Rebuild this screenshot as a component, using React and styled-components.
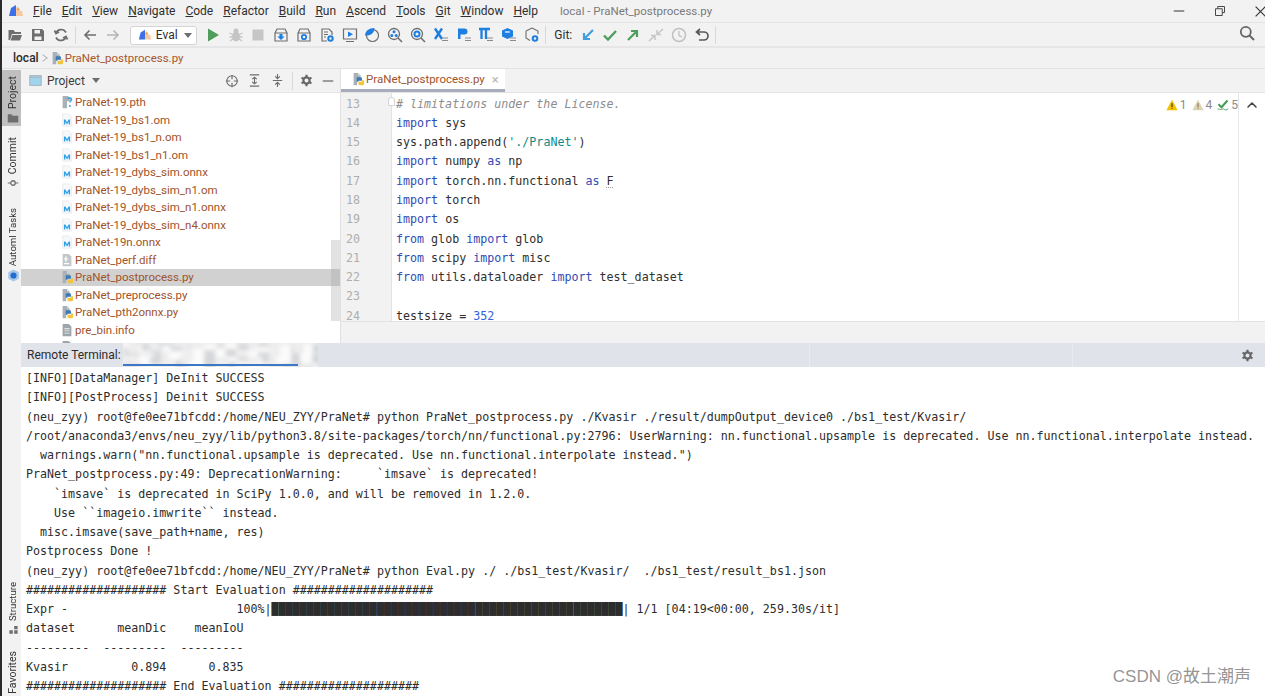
import React from "react";
import styled, { createGlobalStyle } from "styled-components";
import { ChevronUp } from "lucide-react";

const GlobalStyle = createGlobalStyle`
  html, body { margin: 0; padding: 0; background: #fff; }
  body { font-family: Roboto, "Liberation Sans", sans-serif; }
`;

const MENU = ["File", "Edit", "View", "Navigate", "Code", "Refactor", "Build", "Run", "Ascend", "Tools", "Git", "Window", "Help"];

const FILES = [
  ["pth", "PraNet-19.pth"],
  ["om", "PraNet-19_bs1.om"],
  ["om", "PraNet-19_bs1_n.om"],
  ["om", "PraNet-19_bs1_n1.om"],
  ["om", "PraNet-19_dybs_sim.onnx"],
  ["om", "PraNet-19_dybs_sim_n1.om"],
  ["om", "PraNet-19_dybs_sim_n1.onnx"],
  ["om", "PraNet-19_dybs_sim_n4.onnx"],
  ["om", "PraNet-19n.onnx"],
  ["diff", "PraNet_perf.diff"],
  ["py", "PraNet_postprocess.py", true],
  ["py", "PraNet_preprocess.py"],
  ["py", "PraNet_pth2onnx.py"],
  ["info", "pre_bin.info"],
  ["info", ""],
];

const TERMINAL = [
  "[INFO][DataManager] DeInit SUCCESS",
  "[INFO][PostProcess] Deinit SUCCESS",
  "(neu_zyy) root@fe0ee71bfcdd:/home/NEU_ZYY/PraNet# python PraNet_postprocess.py ./Kvasir ./result/dumpOutput_device0 ./bs1_test/Kvasir/",
  "/root/anaconda3/envs/neu_zyy/lib/python3.8/site-packages/torch/nn/functional.py:2796: UserWarning: nn.functional.upsample is deprecated. Use nn.functional.interpolate instead.",
  '  warnings.warn("nn.functional.upsample is deprecated. Use nn.functional.interpolate instead.")',
  "PraNet_postprocess.py:49: DeprecationWarning:     `imsave` is deprecated!",
  "    `imsave` is deprecated in SciPy 1.0.0, and will be removed in 1.2.0.",
  "    Use ``imageio.imwrite`` instead.",
  "  misc.imsave(save_path+name, res)",
  "Postprocess Done !",
  "(neu_zyy) root@fe0ee71bfcdd:/home/NEU_ZYY/PraNet# python Eval.py ./ ./bs1_test/Kvasir/  ./bs1_test/result_bs1.json",
  "#################### Start Evaluation ####################",
  "Expr -                        100%|" + "█".repeat(50) + "| 1/1 [04:19<00:00, 259.30s/it]",
  "dataset      meanDic    meanIoU",
  "---------  ---------  ---------",
  "Kvasir         0.894      0.835",
  "#################### End Evaluation ####################",
];

const Root = styled.div`
  position: relative;
  width: 1265px;
  height: 696px;
  box-sizing: border-box;
  border-left: 2px solid #2b2b2b;
  display: flex;
  flex-direction: column;
  overflow: hidden;
  background: #f2f2f2;
  color: #2f2f2f;
`;

const TitleBar = styled.div`
  height: 23px;
  box-sizing: border-box;
  flex: none;
  display: flex;
  align-items: center;
  font-size: 12px;
  border-bottom: 1px solid #e4e4e4;
`;

const Logo = styled.div`
  width: 20px;
  padding-left: 6px;
  display: flex;
  align-items: center;
`;

const Menu = styled.div`
  display: flex;
  gap: 10px;
  margin-left: 5px;
  width: 527px;
`;

const MenuItem = styled.span`
  &::first-letter { text-decoration: underline; }
  display: inline-block;
`;

const WindowTitle = styled.div`
  color: #7a7a7a;
  font-size: 11.5px;
  flex: 1;
`;

const WindowButtons = styled.div`
  display: flex;
  align-items: center;
  gap: 28px;
  margin-right: -1.5px;
`;

const Toolbar = styled.div`
  height: 25px;
  box-sizing: border-box;
  flex: none;
  display: flex;
  align-items: center;
  padding: 1px 0 0 2px;
  border-bottom: 2px solid #e6e6e6;
`;

const ToolButton = styled.div`
  width: 22.8px;
  height: 22px;
  flex: none;
  display: flex;
  align-items: center;
  justify-content: center;
`;

const ToolSep = styled.div`
  width: 1px;
  height: 18px;
  flex: none;
  background: #d8d8d8;
  margin: 0 ${(p) => p.$gap}px;
`;

const RunConfig = styled.div`
  width: 67px;
  height: 19px;
  flex: none;
  margin: 0 4.6px 0 5.8px;
  background: #fff;
  border: 1px solid #d4d4d4;
  border-radius: 3px;
  display: flex;
  align-items: center;
  gap: 4px;
  padding-left: 7px;
  box-sizing: border-box;
  font-size: 12px;
`;

const Caret = styled.span`
  width: 0;
  height: 0;
  margin-left: ${(p) => p.$left || 0}px;
  border-left: 4px solid transparent;
  border-right: 4px solid transparent;
  border-top: 5px solid #6e6e6e;
`;

const GitLabel = styled.span`
  font-size: 12px;
  margin: 0 4px 0 6px;
`;

const SearchSlot = styled.div`
  margin-left: auto;
  margin-right: 10px;
`;

const NavBar = styled.div`
  height: 21px;
  box-sizing: border-box;
  flex: none;
  display: flex;
  align-items: center;
  padding-left: 11px;
  font-size: 11.5px;
  color: #a8562a;
  border-bottom: 1px solid #e2e2e2;
`;

const NavRoot = styled.b`
  color: #2b2b2b;
  font-size: 12px;
  font-weight: 500;
`;

const NavChevron = styled.span`
  width: 5px;
  height: 5px;
  border-top: 1px solid #b5b5b5;
  border-right: 1px solid #b5b5b5;
  transform: rotate(45deg) skew(-8deg, -8deg);
  margin: 0 4px 0 1px;
`;

const NavIcon = styled.span`
  display: flex;
  margin-right: 1px;
`;

const Body = styled.div`
  flex: 1;
  min-height: 0;
  display: flex;
`;

const Stripe = styled.div`
  width: 19px;
  flex: none;
  display: flex;
  flex-direction: column;
  padding: 1px 0 2px;
  box-sizing: border-box;
  background: #f2f2f2;
`;

const StripeButton = styled.div`
  display: flex;
  flex-direction: column;
  align-items: center;
  gap: 3px;
  padding: ${(p) => (p.$active ? "6px 0 2px 3px" : "0 0 0 3px")};
  margin-top: ${(p) => p.$top || "0"};
  background: ${(p) => (p.$active ? "#bfbfbf" : "transparent")};
`;

const StripeLabel = styled.span`
  writing-mode: vertical-rl;
  transform: rotate(180deg);
  font-size: ${(p) => p.$size || 10.5}px;
  line-height: 14px;
  color: #333;
  white-space: nowrap;
`;

const Main = styled.div`
  flex: 1;
  min-width: 0;
  display: flex;
  flex-direction: column;
`;

const TopSplit = styled.div`
  height: 274px;
  flex: none;
  display: flex;
`;

const ProjectPanel = styled.div`
  width: 320px;
  flex: none;
  display: flex;
  flex-direction: column;
  border-right: 1px solid #e0e0e0;
  box-sizing: border-box;
`;

const PanelHeader = styled.div`
  height: 24px;
  flex: none;
  display: flex;
  align-items: center;
  padding-left: 8px;
  font-size: 12px;
  color: #3a3a3a;
  box-sizing: border-box;
  border-bottom: 1px solid #e6e6e6;
`;

const PanelTitle = styled.span`
  margin: 0 7px 0 5px;
`;

const PanelActions = styled.div`
  margin-left: auto;
  display: flex;
  align-items: center;
  gap: 8px;
  padding-right: 5px;
`;

const Tree = styled.div`
  flex: 1;
  min-height: 0;
  position: relative;
  overflow: hidden;
  background: #fff;
  padding-top: 0.5px;
`;

const TreeRow = styled.div`
  height: 17.5px;
  display: flex;
  align-items: center;
  padding-left: 39px;
  gap: 1px;
  font-size: 11.5px;
  color: #a0532a;
  background: ${(p) => (p.$selected ? "#d1d1d1" : "transparent")};
`;

const TreeScroll = styled.div`
  position: absolute;
  top: 147px;
  right: 0;
  width: 9px;
  height: 81px;
  background: rgba(160, 160, 160, 0.3);
`;

const Editor = styled.div`
  flex: 1;
  min-width: 0;
  display: flex;
  flex-direction: column;
`;

const TabBar = styled.div`
  height: 24px;
  flex: none;
  display: flex;
  border-bottom: 1px solid #e4e4e4;
  box-sizing: border-box;
`;

const Tab = styled.div`
  width: 164px;
  display: flex;
  align-items: center;
  gap: 1px;
  padding-left: 10px;
  box-sizing: border-box;
  background: #fff;
  border-bottom: 3px solid #a7adbd;
  font-size: 11.5px;
  color: #a0532a;
`;

const TabClose = styled.span`
  color: #b5b5b5;
  font-size: 13px;
  margin-left: 6px;
`;

const CodeArea = styled.div`
  height: 229px;
  flex: none;
  position: relative;
  overflow: hidden;
  padding-top: 1.5px;
  background: linear-gradient(90deg, #f2f2f2 50px, #e2e2e2 50px 51px, #fff 51px);
  border-bottom: 1px solid #e2e2e2;
  box-sizing: border-box;

  &::after {
    content: "";
    position: absolute;
    top: 0;
    bottom: 0;
    left: 897px;
    width: 1px;
    background: #e6e6e6;
  }
`;

const CodeLine = styled.div`
  display: flex;
  height: 19.3px;
  line-height: 19.3px;
  font-family: "DejaVu Sans Mono", "Liberation Mono", monospace;
  font-size: 11.66px;
  white-space: pre;
`;

const LineNo = styled.span`
  width: 51px;
  flex: none;
  box-sizing: border-box;
  padding-left: 5px;
  color: #aeaeae;
`;

const CodeText = styled.span`
  padding-left: 4px;
  color: #2f2f2f;
`;

const Kw = styled.span`
  color: #2f4cb4;
`;

const Comment = styled.span`
  color: #8c8c8c;
  font-style: italic;
`;

const Str = styled.span`
  color: #0e8a8a;
`;

const Num = styled.span`
  color: #2f63e0;
`;

const Weak = styled.span`
  text-decoration: underline dotted #9a9a9a;
  text-underline-offset: 2px;
`;

const FoldMark = styled.span`
  position: absolute;
  left: 47px;
  top: 4px;
  width: 7px;
  height: 9px;
  background: #fff;
  border: 1px solid #d4d4d4;
  border-radius: 3px 3px 0 0;
  box-sizing: border-box;
`;

const Inspections = styled.div`
  position: absolute;
  top: 4px;
  right: 5px;
  z-index: 1;
  display: flex;
  align-items: center;
  gap: 2px;
  font-size: 12px;
  color: #8a8a8a;
  height: 16px;
`;

const InspectCount = styled.span`
  margin-right: 3px;
`;

const ChevronSlot = styled.span`
  display: flex;
  margin-left: 1px;
  color: #444;
`;

const HScrollZone = styled.div`
  flex: 1;
  background: #f2f2f2;
`;

const TerminalHeader = styled.div`
  height: 24px;
  flex: none;
  display: flex;
  align-items: center;
  background: #e1e3eb;
  font-size: 12px;
  padding-left: 6px;
  color: #2b2b2b;
`;

const TerminalLabel = styled.span`
  width: 96px;
  flex: none;
`;

const BlurredTab = styled.div`
  position: relative;
  width: 195px;
  height: 24px;
  flex: none;
  overflow: hidden;
  background: #ececee;

  &::after {
    content: "";
    position: absolute;
    left: 0;
    bottom: 1px;
    width: 175px;
    height: 2px;
    background: #3d78c8;
  }
`;

const HeaderDivider = styled.div`
  width: 1px;
  height: 24px;
  flex: none;
  background: #eaebf0;
  margin-left: ${(p) => p.$left}px;
`;

const HeaderGear = styled.div`
  margin-left: auto;
  margin-right: 11px;
  display: flex;
`;

const Terminal = styled.div`
  flex: 1;
  min-height: 0;
  overflow: hidden;
  background: #fff;
  padding: 2px 0 0 5px;
  font-family: "DejaVu Sans Mono", "Liberation Mono", monospace;
  font-size: 11.66px;
  line-height: 19.25px;
  color: #2d2d2d;
`;

const TerminalLine = styled.div`
  height: 19.25px;
  white-space: pre;
`;

const Watermark = styled.div`
  position: absolute;
  right: 14px;
  bottom: 8px;
  font-family: "Liberation Sans", "Noto Sans CJK SC", sans-serif;
  font-size: 17px;
  line-height: 22px;
  color: rgba(120, 120, 120, 0.8);
`;

const Svg = ({ size = 16, children }) => (
  <svg width={size} height={size} viewBox="0 0 16 16" fill="none">
    {children}
  </svg>
);

const JetLogo = ({ size = 16 }) => (
  <Svg size={size}>
    <path d="M1 13 3 5l5-3v11z" fill="#3d6fe8" />
    <path d="M8 4l2 3 4 1 1 5H8z" fill="#f7c9a0" />
    <path d="M9.500 3.500 12 7l-3 .5z" fill="#f0a050" />
  </Svg>
);

const PyIcon = () => (
  <Svg size={14}>
    <path d="M3 1h5l3 3v4H7v7H3z" fill="#a9b1b8" />
    <path d="M8 1v3h3z" fill="#d8dce0" />
    <path d="M7 6h4c1 0 1.500.7 1.500 1.500V10H8.500v1H6.500V7.500C6.500 6.700 6.700 6 7 6z" fill="#3c7ab5" />
    <path d="M8.500 11h4V9.500h1.500c.7 0 1 .7 1 1.500v2.500c0 .8-.7 1.500-1.500 1.500H10c-1 0-1.500-.7-1.500-1.500z" fill="#f3c53c" />
  </Svg>
);

const OmIcon = () => (
  <Svg size={14}>
    <path d="M3 1h7l3 3v11H3z" fill="#f6f8fa" stroke="#dfe3e7" strokeWidth=".7" />
    <path d="M4.500 13V7.500h1.600L8 10.500l1.900-3h1.600V13H10V10l-2 3-2-3v3z" fill="#2f9fe8" />
  </Svg>
);

const PthIcon = () => (
  <Svg size={14}>
    <path d="M3 1h6l3 3v3H8v8H3z" fill="#a9b1b8" />
    <path d="M9 4.500c.4-1.500 4-1.500 4.300.6.200 1.500-2 1.700-2 3.400" stroke="#2f9fe8" strokeWidth="1.500" />
    <circle cx="11.300" cy="12.500" r="1.100" fill="#2f9fe8" />
  </Svg>
);

const DiffIcon = () => (
  <Svg size={14}>
    <path d="M3 1h7l3 3v11H3z" fill="#c2c7cc" />
    <path d="M6 4h1.500v6H6zM4.500 6.200h4.500v1.300H4.500zM4.500 11.500h6v1.300h-6z" fill="#fff" />
  </Svg>
);

const InfoIcon = () => (
  <Svg size={14}>
    <path d="M3 1h7l3 3v11H3z" fill="#9ea5ab" />
    <path d="M5 6h6v1H5zM5 8.500h6v1H5zM5 11h6v1H5z" fill="#f2f2f2" />
  </Svg>
);

const FILE_ICONS = { py: PyIcon, om: OmIcon, pth: PthIcon, diff: DiffIcon, info: InfoIcon };

const ARCHIVE = "M2 6 4 2h8l2 4v8H2zM2 6h12";

const TOOLS = {
  folder: <path d="M1.500 3h5l1.500 2h6v2H5L3 13H1.500zM5.500 8H15l-2 5.500H3.500z" fill="#6e6e6e" />,
  save: (
    <>
      <path d="M2 2h10l2 2v10H2z" fill="#6e6e6e" />
      <path d="M4.500 3H10v3.500H4.500zM4.500 9.500h7V13h-7z" fill="#f2f2f2" />
    </>
  ),
  sync: <path d="M13 5.500A5.500 5.500 0 0 0 3 6M3 10.500A5.500 5.500 0 0 0 13 10M1.500 3.500 3 6.500l3-1.500M14.500 12.500 13 9.500l-3 1.500" stroke="#6e6e6e" strokeWidth="1.700" />,
  back: <path d="M14 8H3M7.500 3.500 3 8l4.500 4.500" stroke="#6e6e6e" strokeWidth="1.600" />,
  forward: <path d="M2 8h11M8.500 3.500 13 8l-4.500 4.500" stroke="#b5b5b5" strokeWidth="1.600" />,
  play: <path d="M3 1.500 14 8 3 14.500z" fill="#4f9e5e" />,
  bug: (
    <>
      <ellipse cx="8" cy="9.500" rx="4" ry="5" fill="#c4c4c4" />
      <circle cx="8" cy="4" r="2.500" fill="#c4c4c4" />
      <path d="M1.500 6 4.500 7.500M14.500 6l-3 1.500M1.500 10h3M14.500 10h-3M2 14l3-2M14 14l-3-2" stroke="#c4c4c4" strokeWidth="1.300" />
    </>
  ),
  stop: <rect x="2.500" y="2.500" width="11" height="11" fill="#c6c6c6" />,
  down: (
    <>
      <path d={ARCHIVE} stroke="#6e6e6e" strokeWidth="1.200" />
      <path d="M6.500 7h3v2.500h2L8 13 4.500 9.500h2z" fill="#1e7fe0" />
    </>
  ),
  gearBox: (
    <>
      <path d={ARCHIVE} stroke="#6e6e6e" strokeWidth="1.200" />
      <circle cx="8" cy="10" r="2.200" stroke="#1e7fe0" strokeWidth="1.800" />
    </>
  ),
  docGear: (
    <>
      <path d="M3 9V2h7l3 3v3M3 9v5h5" stroke="#6e6e6e" strokeWidth="1.200" />
      <path d="M5 5h4M5 7.500h4M5 10h2" stroke="#6e6e6e" strokeWidth="1" />
      <circle cx="11.500" cy="11.500" r="2.200" stroke="#1e7fe0" strokeWidth="2" />
    </>
  ),
  screen: (
    <>
      <path d="M1.500 2h13v10h-13zM4 14.500h8" stroke="#6e6e6e" strokeWidth="1.200" />
      <path d="M6 4.500 11 7.300 6 10z" fill="#1e7fe0" />
    </>
  ),
  pie: (
    <>
      <circle cx="8.500" cy="8.500" r="6" stroke="#6e6e6e" strokeWidth="1.200" />
      <path d="M1 8.500C1 4 5 1 10.500 1c0 5-4 8-9.500 7.500z" fill="#1e7fe0" />
    </>
  ),
  lensDots: (
    <>
      <circle cx="7" cy="7" r="5.500" stroke="#6e6e6e" strokeWidth="1.300" />
      <path d="M11 11l4 4" stroke="#6e6e6e" strokeWidth="1.600" />
      <circle cx="7" cy="4.800" r="1.500" fill="#1e7fe0" />
      <circle cx="4.800" cy="8.500" r="1.500" fill="#1e7fe0" />
      <circle cx="9.200" cy="8.500" r="1.500" fill="#1e7fe0" />
    </>
  ),
  lensRing: (
    <>
      <circle cx="7" cy="7" r="5.500" stroke="#6e6e6e" strokeWidth="1.300" />
      <path d="M11 11l4 4" stroke="#6e6e6e" strokeWidth="1.600" />
      <circle cx="7" cy="7" r="2.500" stroke="#1e7fe0" strokeWidth="2" />
    </>
  ),
  xArrows: (
    <>
      <path d="M2 1.500 9 12M9 1.500 2 12" stroke="#1e7fe0" strokeWidth="2.400" />
      <path d="M9 11h6M9 13.500h6" stroke="#8a8a8a" strokeWidth="1.100" />
    </>
  ),
  pArrows: (
    <>
      <path d="M2 1.500h6.500a2.800 2.800 0 0 1 0 6H4.500V12H2z" fill="#1e7fe0" />
      <path d="M9 11h6M9 13.500h6" stroke="#8a8a8a" strokeWidth="1.100" />
    </>
  ),
  tArrows: (
    <>
      <path d="M1 2h11M3.500 2v10M8 2v10" stroke="#1e7fe0" strokeWidth="2.300" />
      <path d="M9 11h6M9 13.500h6" stroke="#8a8a8a" strokeWidth="1.100" />
    </>
  ),
  hexArrows: (
    <>
      <path d="M6.500 1 12 3.500v6L6.500 12 1 9.500v-6z" fill="#1e7fe0" />
      <path d="M4 5h5" stroke="#fff" strokeWidth="1.200" />
      <path d="M9 11h6M9 13.500h6" stroke="#8a8a8a" strokeWidth="1.100" />
    </>
  ),
  hexGear: (
    <>
      <path d="M8 1l6 3v3M2 4l6-3M2 4v7l4 2.500" stroke="#6e6e6e" strokeWidth="1.100" />
      <circle cx="11" cy="11.500" r="2.300" stroke="#1e7fe0" strokeWidth="2" />
    </>
  ),
  update: <path d="M13 3 4.500 11.500M4 6v6h6" stroke="#3f9fe0" strokeWidth="2.200" />,
  commit: <path d="M2 8.500 6 12.500 14 4" stroke="#4f9e5e" strokeWidth="2.400" />,
  push: <path d="M3 13 11.500 4.500M6 4h6v6" stroke="#4f9e5e" strokeWidth="2.200" />,
  merge: <path d="M1 14 6.500 9M7 13V8.500H3M15 2 9.500 7M9 3v4.500h4" stroke="#c6c6c6" strokeWidth="1.500" />,
  history: (
    <>
      <circle cx="8" cy="8" r="6.500" stroke="#c0c0c0" strokeWidth="1.500" />
      <path d="M8 4v4.500l3 1.500" stroke="#c0c0c0" strokeWidth="1.300" />
    </>
  ),
  rollback: <path d="M6 2 2.500 5 6 8M3 5h7a3.500 3.500 0 0 1 0 8H5" stroke="#5a5a5a" strokeWidth="1.700" />,
  search: (
    <>
      <circle cx="6.800" cy="6.800" r="5" stroke="#666" strokeWidth="1.800" />
      <path d="M10.500 10.500 15 15" stroke="#666" strokeWidth="2" />
    </>
  ),
  target: (
    <>
      <circle cx="8" cy="8" r="6" stroke="#6e6e6e" strokeWidth="1.300" />
      <path d="M8 1v5M8 10v5M1 8h5M10 8h5" stroke="#6e6e6e" strokeWidth="1.300" />
    </>
  ),
  expand: <path d="M3 2h10M3 14h10M8 4.500v7M5.500 6.500 8 4.500l2.500 2M5.500 9.500 8 11.500l2.500-2" stroke="#6e6e6e" strokeWidth="1.200" />,
  collapse: <path d="M3 8h10M8 1v5M8 15v-5M5.500 3.500 8 6l2.500-2.500M5.500 12.500 8 10l2.500 2.500" stroke="#6e6e6e" strokeWidth="1.200" />,
  gear: (
    <>
      <circle cx="8" cy="8" r="3.800" stroke="#666" strokeWidth="2.600" />
      <path d="M8 1v3M8 12v3M1.900 4.500l2.600 1.500M11.500 10l2.600 1.500M1.900 11.500 4.500 10M11.500 6l2.600-1.500" stroke="#666" strokeWidth="2.600" />
    </>
  ),
  hide: <path d="M2 8h12" stroke="#6e6e6e" strokeWidth="1.500" />,
  panel: (
    <>
      <rect x="1" y="2" width="14" height="12" fill="#9fd4ee" stroke="#a9b1b8" strokeWidth="1.200" />
      <path d="M1 4h14" stroke="#a9b1b8" strokeWidth="1.200" />
    </>
  ),
  dir: <path d="M1 3h5l1.500 2H15v9H1z" fill="#6e6e6e" />,
  commitNode: (
    <>
      <circle cx="8" cy="8" r="3" stroke="#6e6e6e" strokeWidth="1.700" />
      <path d="M1 8h4M11 8h4" stroke="#6e6e6e" strokeWidth="1.500" />
    </>
  ),
  hexBadge: (
    <>
      <path d="M8 .500 14.500 4v8L8 15.500 1.500 12V4z" fill="#a9c7e8" />
      <circle cx="8" cy="8" r="3.800" fill="#1e6fd0" />
    </>
  ),
  structure: <path d="M2 9h5v5H2zM9 9h5v5H9zM9 3h5v4.500H9z" fill="#6e6e6e" />,
  minimize: <path d="M2 8h12" stroke="#555" strokeWidth="1.400" />,
  restore: <path d="M5 5V2h9v8h-3M2 5h9v9H2z" stroke="#444" strokeWidth="1.300" />,
  close: <path d="M2 2l12 12M14 2 2 14" stroke="#333" strokeWidth="1.400" />,
};

const Tool = ({ name, size = 16 }) => <Svg size={size}>{TOOLS[name]}</Svg>;

const Warn = ({ fill, mark }) => (
  <Svg size={12}>
    <path d="M8 1 15.500 15H.500z" fill={fill} />
    <path d="M7.200 5.500h1.600v5H7.200zM7.200 11.500h1.600V13H7.200z" fill={mark} />
  </Svg>
);

const WeakCheck = () => (
  <Svg size={12}>
    <path d="M2 7 6 11 14 2" stroke="#3f9a52" strokeWidth="2.600" />
    <path d="M1 14c2-2 3 1 5 0s3-1 4 0 3 1 5-1" stroke="#3f9a52" strokeWidth="1.200" />
  </Svg>
);

const BLUR_CELLS = Array.from({ length: 130 }, (_, i) => ({
  x: (i * 37) % 195,
  y: (i * 13) % 22,
  w: 6 + (i * 7) % 12,
  h: 4 + (i * 5) % 8,
  fill: i % 3 === 0 ? "#fbfbfb" : i % 3 === 1 ? "#d6d7d9" : "#eeeeef",
}));

const Mosaic = () => (
  <svg width="195" height="24">
    <filter id="mosaic-blur">
      <feGaussianBlur stdDeviation="2" />
    </filter>
    <g filter="url(#mosaic-blur)">
      {BLUR_CELLS.map((c, i) => (
        <rect key={i} x={c.x} y={c.y} width={c.w} height={c.h} fill={c.fill} />
      ))}
    </g>
  </svg>
);

const App = () => (
  <>
    <GlobalStyle />
    <Root>
      <TitleBar>
        <Logo>
          <JetLogo />
        </Logo>
        <Menu>
          {MENU.map((m) => (
            <MenuItem key={m}>{m}</MenuItem>
          ))}
        </Menu>
        <WindowTitle>local - PraNet_postprocess.py</WindowTitle>
        <WindowButtons>
          <Tool name="minimize" size={14} />
          <Tool name="restore" size={12} />
          <Tool name="close" size={13} />
        </WindowButtons>
      </TitleBar>

      <Toolbar>
        <ToolButton><Tool name="folder" /></ToolButton>
        <ToolButton><Tool name="save" /></ToolButton>
        <ToolButton><Tool name="sync" /></ToolButton>
        <ToolSep $gap={2.5} />
        <ToolButton><Tool name="back" /></ToolButton>
        <ToolButton><Tool name="forward" /></ToolButton>
        <RunConfig>
          <JetLogo size={14} />
          Eval
          <Caret $left={2} />
        </RunConfig>
        {["play", "bug", "stop", "down", "gearBox", "docGear", "screen", "pie", "lensDots", "lensRing", "xArrows", "pArrows", "tArrows", "hexArrows", "hexGear"].map((n) => (
          <ToolButton key={n}><Tool name={n} /></ToolButton>
        ))}
        <ToolSep $gap={2} />
        <GitLabel>Git:</GitLabel>
        {["update", "commit", "push", "merge", "history", "rollback"].map((n) => (
          <ToolButton key={n}><Tool name={n} /></ToolButton>
        ))}
        <ToolSep $gap={2} />
        <SearchSlot><Tool name="search" /></SearchSlot>
      </Toolbar>

      <NavBar>
        <NavRoot>local</NavRoot>
        <NavChevron />
        <NavIcon><PyIcon /></NavIcon>
        PraNet_postprocess.py
      </NavBar>

      <Body>
        <Stripe>
          <StripeButton $active>
            <StripeLabel>Project</StripeLabel>
            <Tool name="dir" size={12} />
          </StripeButton>
          <StripeButton $top="11px">
            <StripeLabel>Commit</StripeLabel>
            <Tool name="commitNode" size={12} />
          </StripeButton>
          <StripeButton $top="19px">
            <StripeLabel $size={9.6}>Automl Tasks</StripeLabel>
            <Tool name="hexBadge" size={13} />
          </StripeButton>
          <StripeButton $top="auto">
            <StripeLabel $size={9.6}>Structure</StripeLabel>
            <Tool name="structure" size={11} />
          </StripeButton>
          <StripeButton $top="16px">
            <StripeLabel>Favorites</StripeLabel>
          </StripeButton>
        </Stripe>

        <Main>
          <TopSplit>
            <ProjectPanel>
              <PanelHeader>
                <Tool name="panel" size={13} />
                <PanelTitle>Project</PanelTitle>
                <Caret />
                <PanelActions>
                  <Tool name="target" size={14} />
                  <Tool name="expand" size={15} />
                  <Tool name="collapse" size={15} />
                  <ToolSep $gap={-1} />
                  <Tool name="gear" size={13} />
                  <Tool name="hide" size={14} />
                </PanelActions>
              </PanelHeader>
              <Tree>
                {FILES.map(([kind, name, selected], i) => {
                  const Icon = FILE_ICONS[kind];
                  return (
                    <TreeRow key={i} $selected={selected}>
                      <Icon />
                      {name}
                    </TreeRow>
                  );
                })}
                <TreeScroll />
              </Tree>
            </ProjectPanel>

            <Editor>
              <TabBar>
                <Tab>
                  <PyIcon />
                  PraNet_postprocess.py
                  <TabClose>×</TabClose>
                </Tab>
              </TabBar>
              <CodeArea>
                <CodeLine><LineNo>13</LineNo><CodeText><Comment># limitations under the License.</Comment></CodeText></CodeLine>
                <CodeLine><LineNo>14</LineNo><CodeText><Kw>import</Kw> sys</CodeText></CodeLine>
                <CodeLine><LineNo>15</LineNo><CodeText>sys.path.append(<Str>'./PraNet'</Str>)</CodeText></CodeLine>
                <CodeLine><LineNo>16</LineNo><CodeText><Kw>import</Kw> numpy <Kw>as</Kw> np</CodeText></CodeLine>
                <CodeLine><LineNo>17</LineNo><CodeText><Kw>import</Kw> torch.nn.functional <Kw>as</Kw> <Weak>F</Weak></CodeText></CodeLine>
                <CodeLine><LineNo>18</LineNo><CodeText><Kw>import</Kw> torch</CodeText></CodeLine>
                <CodeLine><LineNo>19</LineNo><CodeText><Kw>import</Kw> os</CodeText></CodeLine>
                <CodeLine><LineNo>20</LineNo><CodeText><Kw>from</Kw> glob <Kw>import</Kw> glob</CodeText></CodeLine>
                <CodeLine><LineNo>21</LineNo><CodeText><Kw>from</Kw> scipy <Kw>import</Kw> misc</CodeText></CodeLine>
                <CodeLine><LineNo>22</LineNo><CodeText><Kw>from</Kw> utils.dataloader <Kw>import</Kw> test_dataset</CodeText></CodeLine>
                <CodeLine><LineNo>23</LineNo><CodeText /></CodeLine>
                <CodeLine><LineNo>24</LineNo><CodeText><Weak>testsize</Weak> = <Num>352</Num></CodeText></CodeLine>
                <FoldMark />
                <Inspections>
                  <Warn fill="#f2c200" mark="#4a3c00" />
                  <InspectCount>1</InspectCount>
                  <Warn fill="#dcd3b4" mark="#8a8060" />
                  <InspectCount>4</InspectCount>
                  <WeakCheck />
                  <InspectCount>5</InspectCount>
                  <ChevronSlot><ChevronUp size={16} strokeWidth={2.4} /></ChevronSlot>
                </Inspections>
              </CodeArea>
              <HScrollZone />
            </Editor>
          </TopSplit>

          <TerminalHeader>
            <TerminalLabel>Remote Terminal:</TerminalLabel>
            <BlurredTab><Mosaic /></BlurredTab>
            <HeaderDivider $left={491} />
            <HeaderDivider $left={262} />
            <HeaderGear><Tool name="gear" size={13} /></HeaderGear>
          </TerminalHeader>

          <Terminal>
            {TERMINAL.map((line, i) => (
              <TerminalLine key={i}>{line}</TerminalLine>
            ))}
          </Terminal>
        </Main>
      </Body>

      <Watermark>CSDN @故土潮声</Watermark>
    </Root>
  </>
);

export default App;
